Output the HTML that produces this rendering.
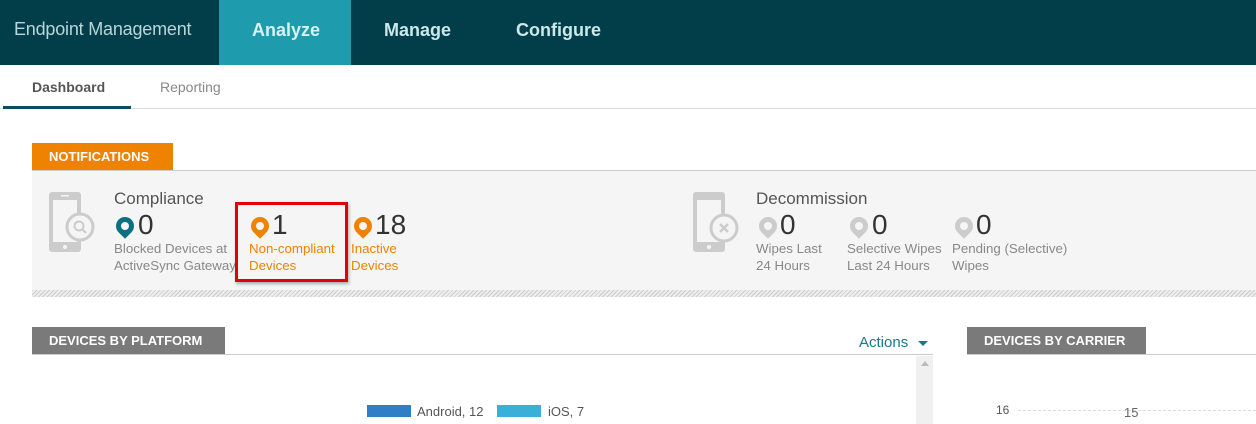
<!DOCTYPE html>
<html><head><style>
*{margin:0;padding:0;box-sizing:border-box}
body{width:1256px;height:424px;overflow:hidden;background:#fff;font-family:"Liberation Sans",sans-serif;position:relative}
.a{position:absolute;white-space:nowrap}
.pin{position:absolute;width:18px;height:18px;border-radius:50% 50% 50% 0;transform:rotate(-45deg)}
.pin:after{content:"";position:absolute;left:5px;top:5px;width:8px;height:8px;border-radius:50%;background:#f5f5f5}
.num{font-size:28px;color:#333}
.lbl{font-size:13.3px;line-height:17px;color:#888}
.org{color:#ef8200}
</style></head><body>
<div class="a" style="left:0;top:0;width:1256px;height:65px;background:#023d4a"></div>
<div class="a" style="left:219px;top:0;width:132px;height:65px;background:#1e9cad"></div>
<div class="a" style="left:14px;top:19px;font-size:18px;color:#b9d6d9;letter-spacing:-0.2px">Endpoint Management</div>
<div class="a" style="left:252px;top:20px;font-size:18px;font-weight:bold;color:#d8f1f3">Analyze</div>
<div class="a" style="left:384px;top:20px;font-size:18px;font-weight:bold;color:#cbe8ea">Manage</div>
<div class="a" style="left:516px;top:20px;font-size:18px;font-weight:bold;color:#cbe8ea">Configure</div>
<div class="a" style="left:32px;top:79px;font-size:14px;font-weight:bold;color:#555">Dashboard</div>
<div class="a" style="left:160px;top:79px;font-size:14px;color:#888">Reporting</div>
<div class="a" style="left:0;top:108px;width:1256px;height:1px;background:#ddd"></div>
<div class="a" style="left:3px;top:106px;width:128px;height:3px;background:#0b4f5f"></div>

<div class="a" style="left:32px;top:143px;width:141px;height:27px;background:#ef8200;color:#fff;font-weight:bold;font-size:13px;padding:6px 0 0 17px">NOTIFICATIONS</div>
<div class="a" style="left:32px;top:170px;width:1224px;height:120px;background:#f5f5f5;border-top:1px solid #ccc"></div>
<div class="a" style="left:32px;top:290px;width:1224px;height:7px;background:repeating-linear-gradient(135deg,#ccc 0 1px,#eee 1px 3px)"></div>

<svg class="a" style="left:48px;top:190px" width="50" height="66"><rect x="1" y="2" width="32" height="60" rx="3" fill="#ccc"/><rect x="5" y="10" width="24" height="42" fill="#f5f5f5"/><rect x="13" y="5" width="8" height="1.5" fill="#f5f5f5"/><circle cx="17" cy="57" r="2" fill="#f5f5f5"/><circle cx="32" cy="37" r="13" fill="#f5f5f5" stroke="#ccc" stroke-width="3"/><circle cx="31" cy="36" r="4.5" fill="none" stroke="#ccc" stroke-width="2"/><line x1="34" y1="39" x2="38" y2="43" stroke="#ccc" stroke-width="2"/></svg>
<svg class="a" style="left:692px;top:192px" width="50" height="66"><rect x="1" y="0" width="32" height="60" rx="3" fill="#ccc"/><rect x="5" y="8" width="24" height="42" fill="#f5f5f5"/><circle cx="17" cy="55" r="2" fill="#f5f5f5"/><circle cx="32" cy="36" r="13" fill="#f5f5f5" stroke="#ccc" stroke-width="3"/><path d="M28 32l8 8M36 32l-8 8" stroke="#ccc" stroke-width="2.5"/></svg>

<div class="a" style="left:114px;top:189px;font-size:17px;color:#555">Compliance</div>
<div class="pin" style="left:116px;top:217px;background:#0e6f80"></div><div class="a num" style="left:138px;top:209px">0</div>
<div class="a lbl" style="left:114px;top:240px">Blocked Devices at<br>ActiveSync Gateway</div>
<div class="a" style="left:236px;top:203px;width:111px;height:78px;background:#f5f5f5"></div>
<div class="pin" style="left:251px;top:217px;background:#ef8200"></div><div class="a num" style="left:272px;top:209px">1</div>
<div class="a lbl org" style="left:249px;top:240px">Non-compliant<br>Devices</div>
<div class="a" style="left:235px;top:202px;width:113px;height:80px;border:3px solid #e30000;box-shadow:1px 2px 3px rgba(0,0,0,.3)"></div>
<div class="pin" style="left:354px;top:217px;background:#ef8200"></div><div class="a num" style="left:375px;top:209px">18</div>
<div class="a lbl org" style="left:351px;top:240px">Inactive<br>Devices</div>

<div class="a" style="left:756px;top:189px;font-size:17px;color:#555">Decommission</div>
<div class="pin" style="left:759px;top:217px;background:#ccc"></div><div class="a num" style="left:780px;top:209px">0</div>
<div class="a lbl" style="left:756px;top:240px">Wipes Last<br>24 Hours</div>
<div class="pin" style="left:850px;top:217px;background:#ccc"></div><div class="a num" style="left:872px;top:209px">0</div>
<div class="a lbl" style="left:847px;top:240px">Selective Wipes<br>Last 24 Hours</div>
<div class="pin" style="left:955px;top:217px;background:#ccc"></div><div class="a num" style="left:976px;top:209px">0</div>
<div class="a lbl" style="left:952px;top:240px">Pending (Selective)<br>Wipes</div>

<div class="a" style="left:32px;top:327px;width:193px;height:27px;background:#7a7a7a;color:#fff;font-weight:bold;font-size:13px;padding:6px 0 0 17px">DEVICES BY PLATFORM</div>
<div class="a" style="left:32px;top:354px;width:901px;height:1px;background:#ccc"></div>
<div class="a" style="left:859px;top:334px;font-size:15px;color:#17788a">Actions</div>
<div class="a" style="left:918px;top:341px;border:5px solid transparent;border-top:5px solid #17788a;border-bottom:0"></div>
<div class="a" style="left:916px;top:356px;width:17px;height:68px;background:#f0f0f0"></div>
<div class="a" style="left:921px;top:361px;border:4px solid transparent;border-bottom:5px solid #bbb;border-top:0"></div>
<div class="a" style="left:367px;top:405px;width:44px;height:12px;background:#2e7fc6"></div>
<div class="a" style="left:417px;top:404px;font-size:13px;color:#555">Android, 12</div>
<div class="a" style="left:497px;top:405px;width:44px;height:12px;background:#3ab0d8"></div>
<div class="a" style="left:548px;top:404px;font-size:13px;color:#555">iOS, 7</div>

<div class="a" style="left:967px;top:327px;width:179px;height:27px;background:#7a7a7a;color:#fff;font-weight:bold;font-size:13px;padding:6px 0 0 17px">DEVICES BY CARRIER</div>
<div class="a" style="left:967px;top:354px;width:289px;height:1px;background:#ccc"></div>
<div class="a" style="left:996px;top:403px;font-size:12px;color:#555">16</div>
<div class="a" style="left:1018px;top:410px;width:238px;border-top:1px dashed #ddd"></div>
<div class="a" style="left:1124px;top:405px;font-size:13px;color:#666">15</div>
</body></html>
